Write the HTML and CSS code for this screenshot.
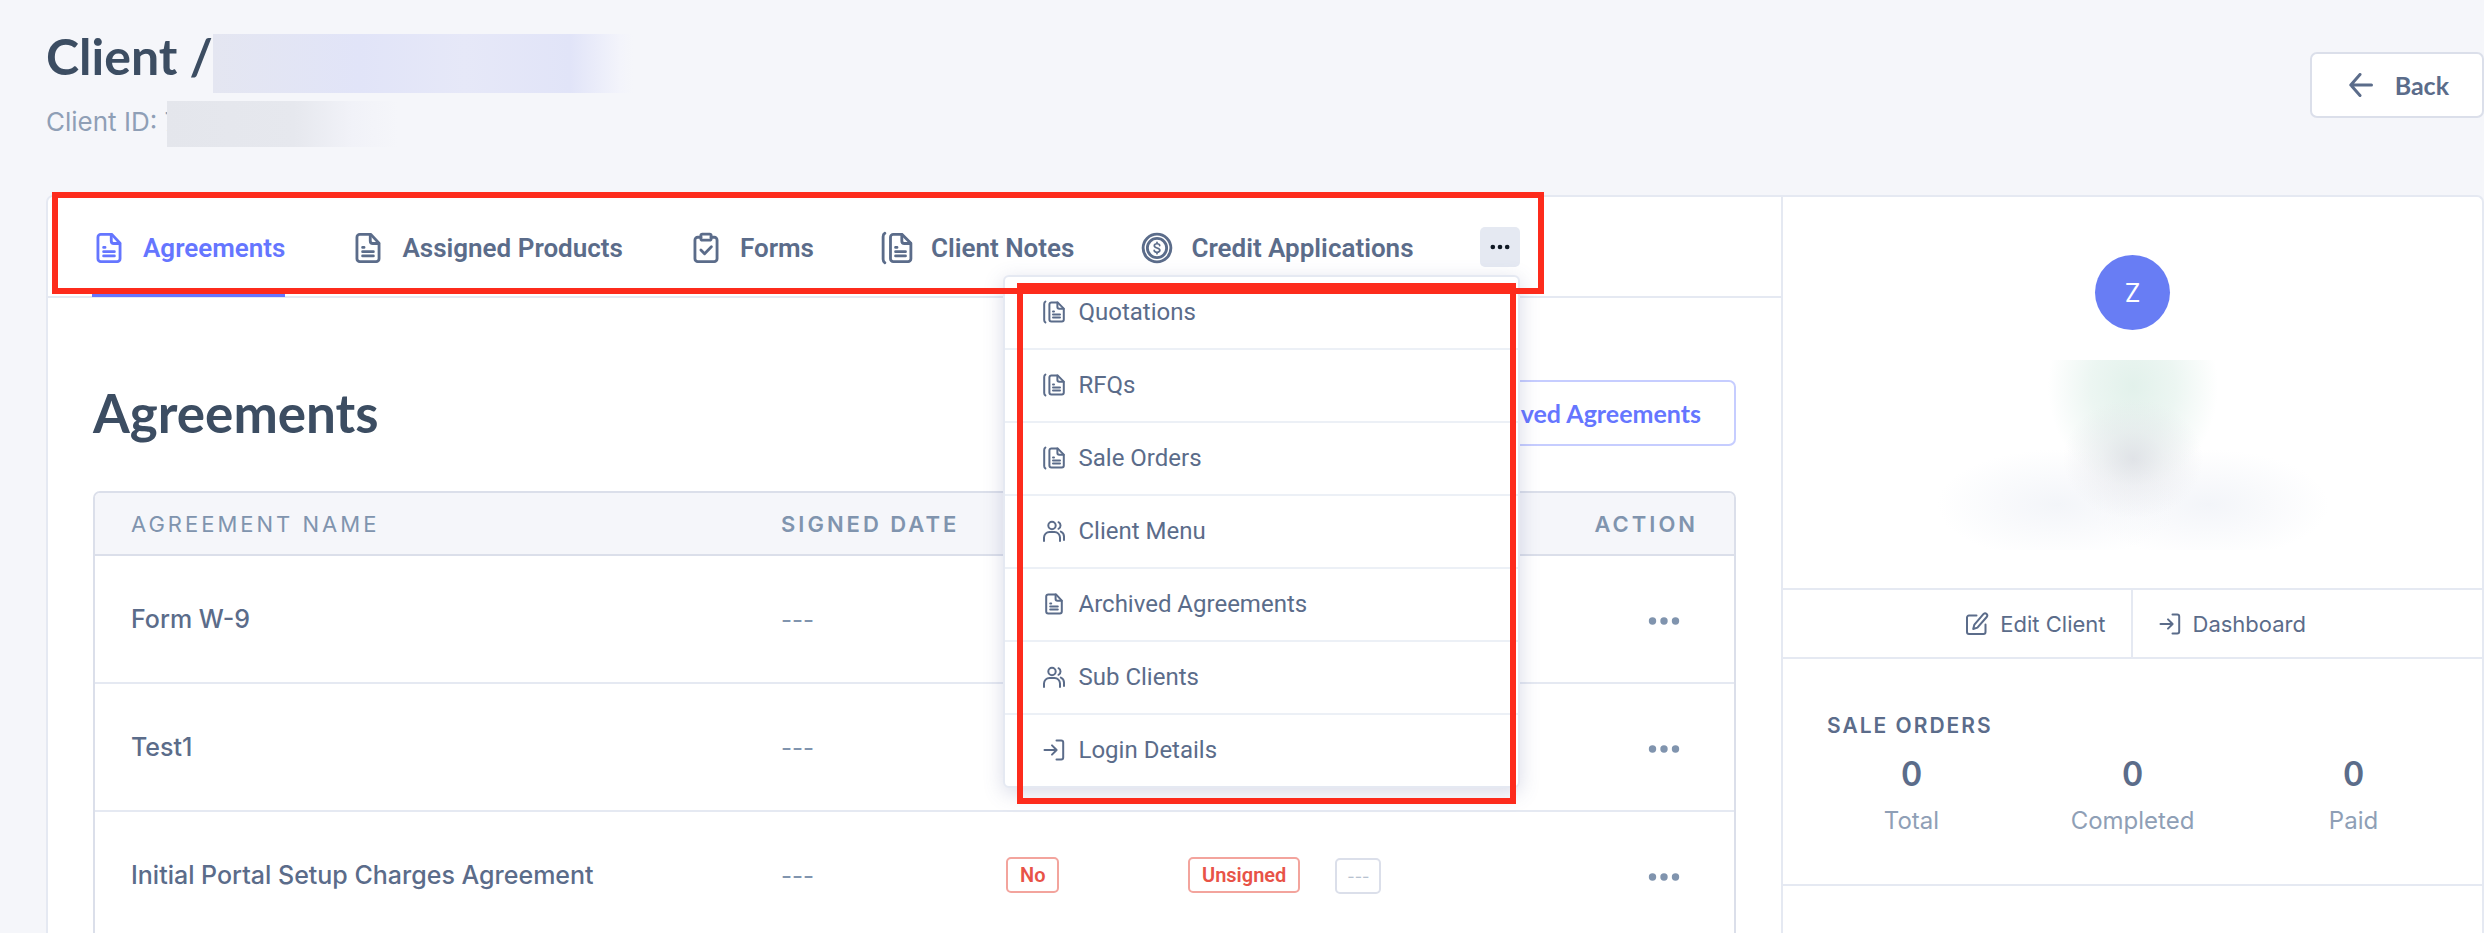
FILE: index.html
```
<!DOCTYPE html>
<html lang="en">
<head>
  <meta charset="UTF-8">
  <title>Client</title>
  <link rel="stylesheet" href="styles.css">
</head>
<body>
  <!-- icons -->
  <svg class="sprite" aria-hidden="true">
    <symbol id="i-file" viewBox="0 0 24 24">
      <path d="M14 2.4H6.2a2 2 0 0 0-2 2v15.2a2 2 0 0 0 2 2h11.6a2 2 0 0 0 2-2V8.6z"/>
      <path d="M13.6 2.6v4.4a1.8 1.8 0 0 0 1.8 1.8h4.2M8.2 11.6h1M8.2 14.6h7.6M8.2 17.6h7.6"/>
    </symbol>
    <symbol id="i-files" viewBox="0 0 24 24">
      <path d="M15.6 2.4H9.4a2 2 0 0 0-2 2v15.2a2 2 0 0 0 2 2h10.4a2 2 0 0 0 2-2V8.6z"/>
      <path d="M15.4 2.6v4.4a1.8 1.8 0 0 0 1.8 1.8h4.4M11 11.6h1M11 14.6h7M11 17.6h7M3.4 1.6c-.7.4-1.2 1.2-1.2 2.4v16c0 1.2.5 2 1.2 2.4"/>
    </symbol>
    <symbol id="i-clip" viewBox="0 0 24 24">
      <path d="M8.4 4.4H6.2a2 2 0 0 0-2 2v13.2a2 2 0 0 0 2 2h11.6a2 2 0 0 0 2-2V6.4a2 2 0 0 0-2-2h-2.2"/>
      <rect x="8.4" y="2.2" width="7.2" height="4.2" rx="1"/>
      <path d="M8.4 13.4l2.6 2.6 4.8-4.8"/>
    </symbol>
    <symbol id="i-coin" viewBox="0 0 24 24">
      <circle cx="12" cy="12" r="9.8"/>
      <circle cx="12" cy="12" r="6.8"/>
      <path d="M13.9 10.3c0-.8-.8-1.3-1.9-1.3s-1.9.5-1.9 1.4c0 2 3.9 1.2 3.9 3.2 0 .9-.9 1.4-2 1.4s-2-.5-2-1.4M12 8v1M12 15v1" stroke-width="1.2"/>
    </symbol>
    <symbol id="i-users" viewBox="0 0 24 24">
      <circle cx="10" cy="6.5" r="3.7"/>
      <path d="M2 22v-3.5a5.500 5.500 0 0 1 5.500-5.500h5a5.500 5.500 0 0 1 5.500 5.500V22M16.500 3.200a3.700 3.700 0 0 1 0 6.600M18.800 12.600c2 .8 3.200 2.800 3.200 5V21"/>
    </symbol>
    <symbol id="i-login" viewBox="0 0 24 24">
      <path d="M2.5 12h12M10 7.4l4.6 4.6-4.6 4.6M14.5 2.5h4.7a2 2 0 0 1 2 2v15a2 2 0 0 1-2 2h-4.7"/>
    </symbol>
    <symbol id="i-edit" viewBox="0 0 24 24">
      <path d="M11.5 3.5H4a2 2 0 0 0-2 2V20a2 2 0 0 0 2 2h14.5a2 2 0 0 0 2-2v-7.5"/>
      <path d="M18.6 1.9a2.2 2.2 0 0 1 3.1 3.1L12.4 15.6 8.200 17l1.200-4.400z"/>
    </symbol>
    <symbol id="i-back" viewBox="0 0 24 24">
      <path d="M22.5 12H2M11 1.5L1.8 12 11 22.5"/>
    </symbol>
    <symbol id="i-dots" viewBox="0 0 32 10">
      <circle cx="4.5" cy="5" r="3.7"/><circle cx="16" cy="5" r="3.7"/><circle cx="27.5" cy="5" r="3.7"/>
    </symbol>
  </svg>

  <div class="page">
    <header class="page-head">
      <div>
        <div class="title-line">
          <h1>Client /</h1>
          <span class="redact-name"></span>
        </div>
        <div class="id-line">
          <span>Client ID: 7</span>
          <span class="redact-id"></span>
        </div>
      </div>
      <button class="btn btn-back"><svg class="icon"><use href="#i-back"/></svg>Back</button>
    </header>

    <div class="card">
      <main class="card-main">
        <nav class="tabs">
          <a href="#" class="tab active"><svg class="icon"><use href="#i-file"/></svg>Agreements</a>
          <a href="#" class="tab"><svg class="icon"><use href="#i-file"/></svg>Assigned Products</a>
          <a href="#" class="tab"><svg class="icon"><use href="#i-clip"/></svg>Forms</a>
          <a href="#" class="tab"><svg class="icon"><use href="#i-files"/></svg>Client Notes</a>
          <a href="#" class="tab"><svg class="icon"><use href="#i-coin"/></svg>Credit Applications</a>
          <div class="more">
            <button class="btn-more" aria-label="More"><svg class="dots"><use href="#i-dots"/></svg></button>
            <ul class="dropdown">
              <li><a href="#"><svg class="icon"><use href="#i-files"/></svg>Quotations</a></li>
              <li><a href="#"><svg class="icon"><use href="#i-files"/></svg>RFQs</a></li>
              <li><a href="#"><svg class="icon"><use href="#i-files"/></svg>Sale Orders</a></li>
              <li><a href="#"><svg class="icon"><use href="#i-users"/></svg>Client Menu</a></li>
              <li><a href="#"><svg class="icon"><use href="#i-file"/></svg>Archived Agreements</a></li>
              <li><a href="#"><svg class="icon"><use href="#i-users"/></svg>Sub Clients</a></li>
              <li><a href="#"><svg class="icon"><use href="#i-login"/></svg>Login Details</a></li>
            </ul>
            <div class="mark mark-menu"></div>
          </div>
          <div class="mark mark-tabs"></div>
        </nav>

        <section class="content">
          <div class="content-head">
            <h2>Agreements</h2>
            <button class="btn btn-outline">Archived Agreements</button>
          </div>

          <table class="list">
            <thead>
              <tr>
                <th class="col-name">Agreement Name</th>
                <th class="col-date">Signed Date</th>
                <th class="col-flag"></th>
                <th class="col-status"></th>
                <th class="col-action">Action</th>
              </tr>
            </thead>
            <tbody>
              <tr>
                <td>Form W-9</td>
                <td class="soft">---</td>
                <td></td>
                <td></td>
                <td class="col-action"><button class="row-more" aria-label="Actions"><svg class="dots"><use href="#i-dots"/></svg></button></td>
              </tr>
              <tr>
                <td>Test1</td>
                <td class="soft">---</td>
                <td></td>
                <td></td>
                <td class="col-action"><button class="row-more" aria-label="Actions"><svg class="dots"><use href="#i-dots"/></svg></button></td>
              </tr>
              <tr>
                <td>Initial Portal Setup Charges Agreement</td>
                <td class="soft">---</td>
                <td><span class="badge">No</span></td>
                <td><span class="badge">Unsigned</span><span class="badge badge-gray">---</span></td>
                <td class="col-action"><button class="row-more" aria-label="Actions"><svg class="dots"><use href="#i-dots"/></svg></button></td>
              </tr>
            </tbody>
          </table>
        </section>
      </main>

      <aside class="card-aside">
        <div class="profile">
          <div class="avatar">Z</div>
          <div class="redact-profile"></div>
        </div>
        <div class="actions">
          <a href="#"><svg class="icon"><use href="#i-edit"/></svg>Edit Client</a>
          <a href="#"><svg class="icon"><use href="#i-login"/></svg>Dashboard</a>
        </div>
        <div class="orders">
          <h6>Sale Orders</h6>
          <div class="stats">
            <div><strong>0</strong><span>Total</span></div>
            <div><strong>0</strong><span>Completed</span></div>
            <div><strong>0</strong><span>Paid</span></div>
          </div>
        </div>
      </aside>
    </div>
  </div>
</body>
</html>
```
FILE: styles.css
```
* {
  box-sizing: border-box;
}

body {
  margin: 0;
  background: #f5f6fa;
  color: #5b6c8a;
  font-family: Inter, Roboto, sans-serif;
  font-size: 24px;
}

a {
  color: inherit;
  text-decoration: none;
}

button {
  font-family: inherit;
  color: inherit;
  cursor: pointer;
}

h1, h2, h6 {
  margin: 0;
}

.sprite {
  display: none;
}

.icon {
  fill: none;
  stroke: currentColor;
  stroke-width: 2;
  stroke-linecap: round;
  stroke-linejoin: round;
  flex: none;
}

.page {
  height: 100vh;
  overflow: hidden;
  padding-left: 46px;
  display: flex;
  flex-direction: column;
}

/* header */
.page-head {
  display: flex;
  justify-content: space-between;
  align-items: flex-start;
  height: 195px;
  flex: none;
}

.title-line {
  display: flex;
  align-items: flex-start;
  padding-top: 26px;
}

h1, h2 {
  font-family: Lato, "Open Sans", sans-serif;
  font-weight: 700;
  color: #3c4d62;
  line-height: 60px;
}

h1 {
  font-size: 50px;
}

h2 {
  font-size: 53px;
}

.redact-name {
  width: 420px;
  height: 59px;
  margin-top: 8px;
  background: linear-gradient(90deg, #e4e6f1, #e1e4f8 35%, #e6e8f8 60%, #e1e4f8 85%, #f3f4fb 97%, #f5f6fa);
}

.id-line {
  display: flex;
  align-items: flex-start;
  margin-top: 8px;
  color: #8f9fb6;
  font-size: 26px;
  line-height: 42px;
}

.redact-id {
  width: 231px;
  height: 46px;
  margin-left: -12px;
  background: linear-gradient(90deg, #e4e6ec, #e6e8ee 55%, #f1f2f8 80%, #f5f6fa);
}

.btn {
  display: inline-flex;
  align-items: center;
  background: #fff;
  border: 2px solid #dbdfea;
  border-radius: 7px;
  height: 66px;
  font-family: Lato, "Open Sans", sans-serif;
  font-weight: 700;
  font-size: 25px;
}

.btn-back {
  margin-top: 52px;
  gap: 22px;
  padding: 0 33px 0 37px;
}

.btn-back .icon {
  width: 24px;
  height: 24px;
  stroke-width: 3;
}

/* card */
.card {
  display: flex;
  flex: 1;
  background: #fff;
  border: 2px solid #e5e9f2;
  border-bottom: 0;
  border-radius: 7px 7px 0 0;
}

.card-main {
  flex: 1;
  min-width: 0;
}

.card-aside {
  width: 701px;
  flex: none;
  border-left: 2px solid #e5e9f2;
}

/* tabs */
.tabs {
  position: relative;
  display: flex;
  align-items: center;
  gap: 66px;
  height: 101px;
  padding-left: 44px;
  border-bottom: 2px solid #e5e9f2;
  font-family: Roboto, sans-serif;
}

.tab {
  display: flex;
  align-items: center;
  gap: 17px;
  height: 101px;
  font-size: 26px;
  font-weight: 600;
  border-bottom: 5px solid transparent;
  border-top: 7px solid transparent;
}

.tab .icon {
  width: 34px;
  height: 34px;
}

.tab.active {
  color: #6576ff;
  border-bottom-color: #6576ff;
}

.more {
  position: relative;
}

.btn-more {
  display: flex;
  align-items: center;
  justify-content: center;
  width: 40px;
  height: 40px;
  padding: 0;
  border: 0;
  border-radius: 5px;
  background: #e5e9f2;
}

.btn-more .dots {
  width: 20px;
  height: 8px;
  fill: #101924;
}

.dropdown {
  position: absolute;
  top: 48px;
  right: 0;
  z-index: 2;
  width: 517px;
  margin: 0;
  padding: 0;
  list-style: none;
  background: #fff;
  border: 2px solid #e5e9f2;
  border-radius: 6px;
  box-shadow: 0 5px 20px rgba(80, 90, 150, 0.22);
}

.dropdown li + li {
  border-top: 2px solid #ecf0f6;
}

.dropdown a {
  display: flex;
  align-items: center;
  gap: 13px;
  height: 71px;
  padding-left: 37px;
  font-size: 24px;
}

.dropdown .icon {
  width: 24px;
  height: 24px;
}

/* highlight frames */
.mark {
  position: absolute;
  z-index: 3;
  border: 6px solid #fd2b1c;
  pointer-events: none;
}

.mark-tabs {
  top: -5px;
  left: 4px;
  width: 1492px;
  height: 102px;
}

.mark-menu {
  top: 56px;
  right: 4px;
  width: 499px;
  height: 521px;
}

/* content */
.content {
  padding: 82px 45px 0;
}

.content-head {
  display: flex;
  justify-content: space-between;
  align-items: center;
  margin-bottom: 45px;
}

.btn-outline {
  color: #6576ff;
  border-color: #c6cdff;
  padding: 0 33px;
}

/* table */
.list {
  width: 100%;
  table-layout: fixed;
  border-spacing: 0;
  border: 2px solid #dbdfea;
  border-radius: 7px;
  overflow: hidden;
}

.list th {
  height: 63px;
  padding: 0;
  background: #f5f6fa;
  border-bottom: 2px solid #dbdfea;
  color: #8094ae;
  font-size: 22px;
  font-weight: 600;
  letter-spacing: 3px;
  text-align: left;
  text-transform: uppercase;
}

.list td {
  height: 128px;
  padding: 0;
  border-bottom: 2px solid #e5e9f2;
}

.list td:first-child,
.list th:first-child {
  padding-left: 36px;
}

.list td:first-child {
  font-size: 25px;
  font-weight: 500;
}

.list th.col-name {
  width: 686px;
  font-weight: 400;
}

.list th.col-date {
  width: 225px;
}

.list th.col-flag {
  width: 182px;
}

.list th.col-status {
  width: 20%;
}

.list th.col-action {
  padding-right: 36px;
  text-align: right;
}

.list td.col-action {
  padding-right: 54px;
  text-align: right;
}

.list .soft {
  color: #8094ae;
}

.row-more {
  padding: 0;
  border: 0;
  background: none;
  vertical-align: middle;
}

.row-more .dots {
  display: block;
  width: 32px;
  height: 10px;
  fill: #8094ae;
}

.badge {
  display: inline-block;
  padding: 0 12px;
  border: 2px solid #f3a49d;
  border-radius: 5px;
  color: #e85347;
  font-family: Roboto, sans-serif;
  font-size: 20px;
  font-weight: 600;
  line-height: 32px;
}

.badge-gray {
  margin-left: 35px;
  padding: 0 10px;
  border-color: #dbdfea;
  color: #b7c2d0;
  font-family: Inter, sans-serif;
  font-size: 16px;
  font-weight: 400;
}

/* sidebar */
.profile {
  height: 393px;
  padding-top: 58px;
  border-bottom: 2px solid #e5e9f2;
}

.avatar {
  display: flex;
  align-items: center;
  justify-content: center;
  width: 75px;
  height: 75px;
  margin: 0 auto;
  border-radius: 50%;
  background: #687df4;
  color: #fff;
  font-size: 25px;
}

.redact-profile {
  width: 420px;
  height: 190px;
  margin: 30px auto 0;
  background:
    radial-gradient(ellipse 70px 60px at 50% 52%, rgba(215, 217, 224, 0.7), rgba(225, 227, 232, 0.45) 45%, rgba(255, 255, 255, 0)),
    radial-gradient(ellipse 85px 100px at 50% 14%, #e2f1eb, rgba(226, 241, 235, 0.65) 50%, rgba(255, 255, 255, 0)),
    radial-gradient(ellipse 120px 55px at 32% 76%, #f3f5f9, rgba(255, 255, 255, 0)),
    radial-gradient(ellipse 120px 55px at 68% 76%, #f3f5f9, rgba(255, 255, 255, 0));
}

.actions {
  display: grid;
  grid-template-columns: 1fr 1fr;
  height: 69px;
  border-bottom: 2px solid #e5e9f2;
  font-size: 22px;
}

.actions a {
  display: flex;
  align-items: center;
  gap: 11px;
  padding: 0 25px;
}

.actions a:first-child {
  justify-content: flex-end;
  border-right: 2px solid #e5e9f2;
}

.actions .icon {
  width: 24px;
  height: 24px;
}

.orders {
  height: 227px;
  padding: 54px 18px 0;
  border-bottom: 2px solid #e5e9f2;
}

.orders h6 {
  padding-left: 26px;
  font-size: 21px;
  font-weight: 600;
  line-height: 26px;
  letter-spacing: 2px;
  text-transform: uppercase;
}

.stats {
  display: grid;
  grid-template-columns: repeat(3, 1fr);
  text-align: center;
}

.stats strong {
  display: block;
  margin-top: 12px;
  font-family: Lato, "Open Sans", sans-serif;
  font-size: 34px;
  line-height: 44px;
}

.stats span {
  display: block;
  color: #8f9fb6;
  font-size: 24px;
  line-height: 52px;
}
```
